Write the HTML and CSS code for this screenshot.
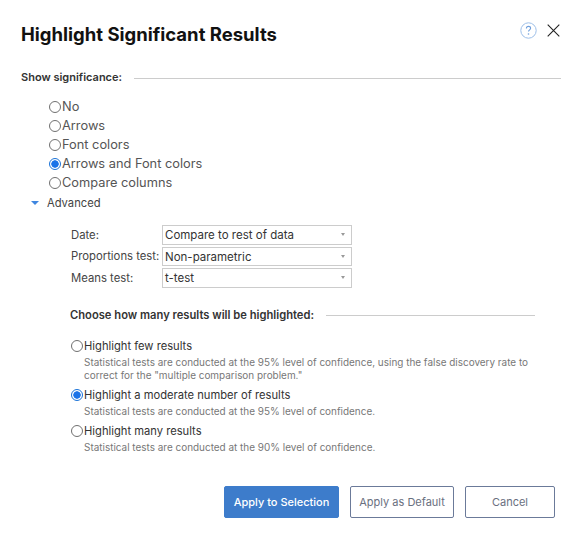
FILE: index.html
```html
<!DOCTYPE html>
<html lang="en">
<head>
<meta charset="utf-8">
<title>Highlight Significant Results</title>
<link rel="stylesheet" href="styles.css">
</head>
<body>
<div class="dialog">
  <header class="head">
    <h1 class="title">Highlight Significant Results</h1>
    <div class="head-icons">
      <svg class="help" width="17" height="17" viewBox="0 0 17 17"><circle cx="8.5" cy="8.5" r="7.7" fill="none" stroke="#9dbfe8" stroke-width="1"/><path d="M6.4 6.4c0-1.3 1-2 2.1-2s2.1.7 2.1 1.9c0 1.5-2.1 1.6-2.1 3.3" fill="none" stroke="#6f9fdc" stroke-width="1.1"/><circle cx="8.5" cy="12" r=".8" fill="#6f9fdc"/></svg>
      <svg class="close" width="13" height="13" viewBox="0 0 13 13"><path d="M.7.7l11.6 11.6M12.3.7L.7 12.3" fill="none" stroke="#222" stroke-width="1.1"/></svg>
    </div>
  </header>
  <div class="section">
    <span class="section-label">Show significance:</span><span class="rule"></span>
  </div>
  <div class="options">
    <label class="opt"><span class="radio"></span>No</label>
    <label class="opt"><span class="radio"></span>Arrows</label>
    <label class="opt"><span class="radio"></span>Font colors</label>
    <label class="opt"><span class="radio on"></span>Arrows and Font colors</label>
    <label class="opt"><span class="radio"></span>Compare columns</label>
  </div>
  <div class="advanced"><span class="tri"></span>Advanced</div>
  <div class="form">
    <div class="form-row"><span class="form-label">Date:</span><div class="select">Compare to rest of data<span class="caret"></span></div></div>
    <div class="form-row"><span class="form-label">Proportions test:</span><div class="select">Non-parametric<span class="caret"></span></div></div>
    <div class="form-row"><span class="form-label">Means test:</span><div class="select">t-test<span class="caret"></span></div></div>
  </div>
  <div class="section sub">
    <span class="section-label">Choose how many results will be highlighted:</span><span class="rule"></span>
  </div>
  <div class="levels">
    <div class="level">
      <label class="lvl"><span class="radio"></span>Highlight few results</label>
      <p class="desc">Statistical tests are conducted at the 95% level of confidence, using the false discovery rate to correct for the "multiple comparison problem."</p>
    </div>
    <div class="level">
      <label class="lvl"><span class="radio on"></span>Highlight a moderate number of results</label>
      <p class="desc">Statistical tests are conducted at the 95% level of confidence.</p>
    </div>
    <div class="level">
      <label class="lvl"><span class="radio"></span>Highlight many results</label>
      <p class="desc">Statistical tests are conducted at the 90% level of confidence.</p>
    </div>
  </div>
  <div class="buttons">
    <button class="btn primary">Apply to Selection</button>
    <button class="btn b2">Apply as Default</button>
    <button class="btn b3">Cancel</button>
  </div>
</div>
</body>
</html>
```
FILE: styles.css
```css
* { box-sizing: border-box; }
html, body { margin: 0; padding: 0; background: #fff; }
body { width: 581px; height: 539px; overflow: hidden; font-family: "Inter", "Liberation Sans", sans-serif; color: #3a3a3a; }
.dialog { padding: 20px 20px 0 21px; }
.head { display: flex; justify-content: space-between; align-items: flex-start; height: 30px; }
.title { margin: 0; font-size: 18.5px; line-height: 28px; font-weight: 700; color: #111; }
.head-icons { display: flex; align-items: center; gap: 10px; margin-top: 2px; margin-right: 1px; }
.section { display: flex; align-items: center; margin-top: 19px; height: 16px; }
.section-label { font-size: 11px; font-weight: 600; color: #333; white-space: nowrap; }
.rule { flex: 1; height: 1px; background: #ccc; margin-left: 12px; margin-top: 2px; }
.options { margin: 12px 0 0 28px; font-size: 12.8px; color: #555; }
.opt { display: flex; align-items: center; height: 19px; }
.radio { width: 12px; height: 12px; border: 1px solid #707070; border-radius: 50%; background: #fff; flex: none; margin-right: 1px; }
.radio.on { border-color: #1a73d8; background: radial-gradient(circle, #1a73e8 0 3.4px, #fff 4px); }
.advanced { display: flex; align-items: center; height: 19px; margin: 1px 0 0 10px; font-size: 11.2px; color: #444; }
.tri { width: 0; height: 0; border-left: 4px solid transparent; border-right: 4px solid transparent; border-top: 4px solid #3f86e0; margin-right: 8px; }
.form { margin: 13px 0 0 50px; display: flex; flex-direction: column; gap: 2px; }
.form-row { display: flex; align-items: center; height: 19.5px; font-size: 11.3px; color: #444; }
.form-label { width: 91px; white-space: nowrap; }
.select { position: relative; width: 190px; height: 19.5px; border: 1px solid #ccc; padding-left: 2px; line-height: 18px; font-size: 11.5px; color: #333; }
.caret { position: absolute; right: 6px; top: 7px; width: 0; height: 0; border-left: 2.5px solid transparent; border-right: 2.5px solid transparent; border-top: 3px solid #999; }
.sub { margin: 18px 26px 0 49px; height: 18px; }
.sub .section-label { font-size: 11.2px; }
.sub .rule { margin-top: 1px; }
.levels { margin: 13px 0 0 50px; }
.level { margin-bottom: 4px; }
.lvl { display: flex; align-items: center; height: 19px; font-size: 11.2px; color: #333; }
.desc { margin: 0 0 0 13px; font-size: 9.95px; line-height: 13px; color: #777; width: 450px; }
.buttons { display: flex; margin: 32px 0 0 203px; gap: 11px; }
.btn { height: 32px; border-radius: 2px; font: inherit; font-size: 11px; background: #fff; border: 1px solid #6b7a99; color: #6a7080; padding: 0; }
.primary { width: 115px; background: #3d7ccb; border-color: #3d7ccb; color: #fff; font-weight: 500; }
.b2 { width: 104px; }
.b3 { width: 90px; }
```
